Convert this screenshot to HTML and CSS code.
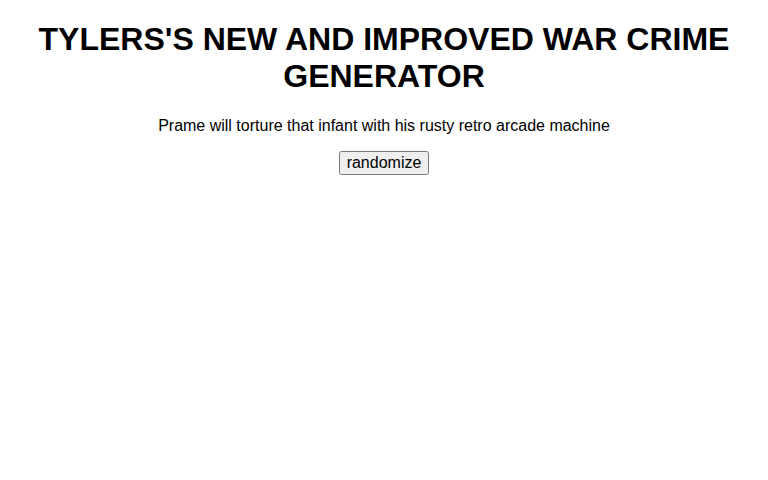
FILE: index.html
```html
<!DOCTYPE html>
<html lang="en">
<head>
    <meta charset="UTF-8">
    <meta name="viewport" content="width=device-width, initial-scale=1.0">
    <title>Generator</title>
    <link rel="stylesheet" href="styles.css">
</head>
<body>
    <h1>TYLERS'S NEW AND IMPROVED WAR CRIME GENERATOR</h1>
    <p id="sentence">Prame will torture that infant with his rusty retro arcade machine</p>
    <button id="randomBtn">randomize</button>
</body>
</html>
```

FILE: styles.css
```css
/* Basic styling */
body {
    font-family: "Liberation Sans", Arial, sans-serif;
    text-align: center;
    background: white;
    color: black;
}

h1 {
    font-size: 32px;
    margin: 13px 0 22px;
}

p {
    font-size: 16px;
}

button {
    font-family: "Liberation Sans", Arial, sans-serif;
    font-size: 16px;
}
```
